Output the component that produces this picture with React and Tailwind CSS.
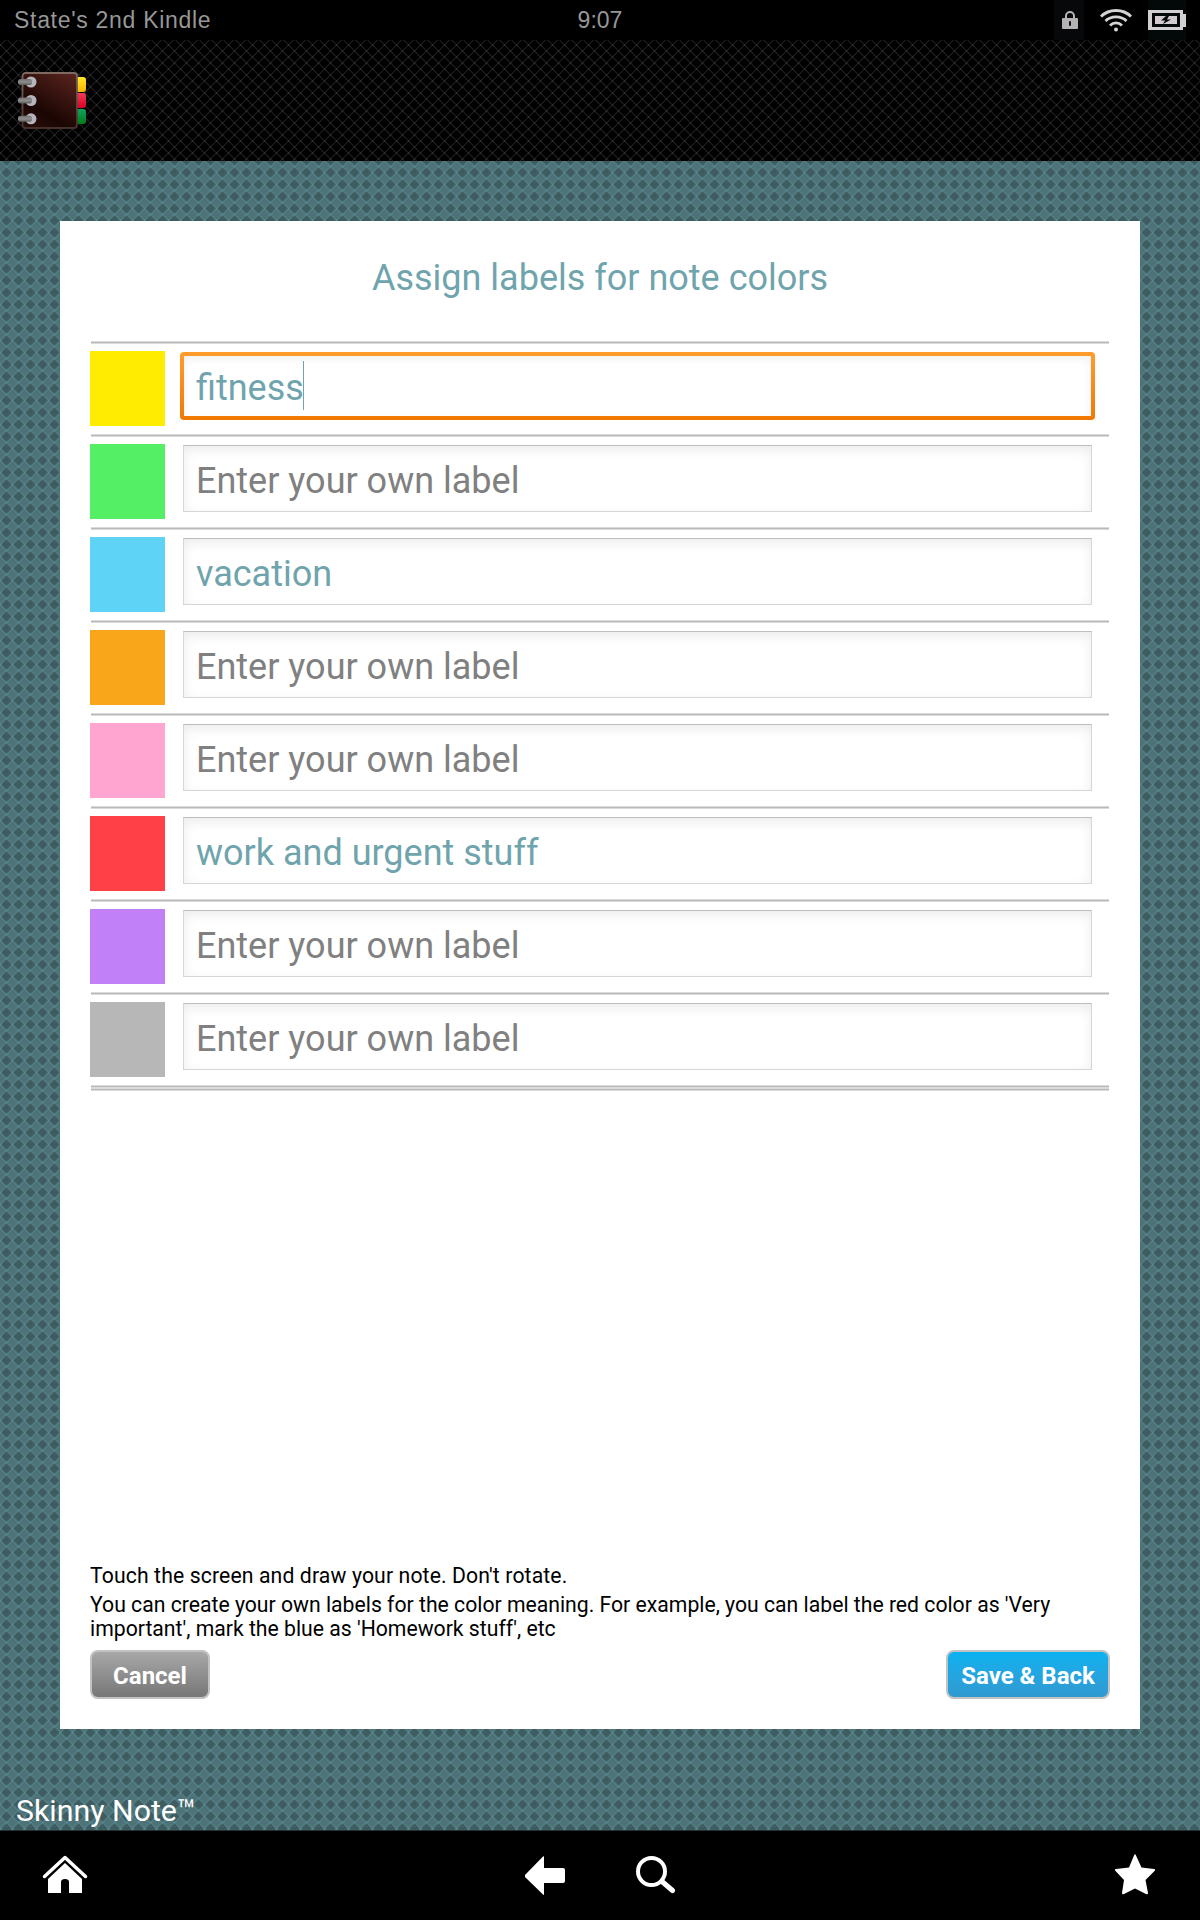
import { useState } from 'react'

const LABELS = [
  { id: 'yellow', swatch: 'bg-[#ffec00]', value: 'fitness' },
  { id: 'green', swatch: 'bg-[#54ef64]', value: '' },
  { id: 'blue', swatch: 'bg-[#5fd3f5]', value: 'vacation' },
  { id: 'orange', swatch: 'bg-[#faa61b]', value: '' },
  { id: 'pink', swatch: 'bg-[#ffa5d0]', value: '' },
  { id: 'red', swatch: 'bg-[#ff4147]', value: 'work and urgent stuff' },
  { id: 'purple', swatch: 'bg-[#c280f8]', value: '' },
  { id: 'grey', swatch: 'bg-[#b7b7b7]', value: '' },
]

// 12px diamond weave, shared by the header and the page background.
function Weave({ id, base, diamond, line, dy }) {
  return (
    <svg className="absolute inset-0 size-full" aria-hidden="true">
      <defs>
        <pattern id={id} width="12" height="12" x="0.5" y={dy} patternUnits="userSpaceOnUse">
          <rect width="12" height="12" fill={base} />
          <path d="M6 0 12 6 6 12 0 6Z" fill={diamond} />
          <path d="M-1 7 7 -1M5 -1 13 7M-1 5 7 13M5 13 13 5" stroke={line} fill="none" />
        </pattern>
      </defs>
      <rect width="100%" height="100%" fill={`url(#${id})`} />
    </svg>
  )
}

function Rule() {
  return <div className="mx-px h-[3px] shrink-0 border-y border-[#dadada] bg-[#b9b9b9]" />
}

function StatusBar() {
  return (
    <div className="flex h-10 items-center bg-black font-['Liberation_Sans',sans-serif] text-[23px] text-[#979797]">
      <span className="w-[400px] pl-[14px] tracking-[0.7px]">State's 2nd Kindle</span>
      <span className="w-[400px] text-center">9:07</span>
      <div className="flex h-10 w-[400px] items-center justify-end pr-[14px]">
        <span className="flex h-10 w-[30px] items-center justify-center bg-[#07080a]">
          <svg className="ml-px" width="16" height="18" viewBox="0 0 16 18" fill="none">
            <path d="M4 8V5a4 4 0 0 1 8 0v3" stroke="#b5b5b5" strokeWidth="2" />
            <rect y="7" width="16" height="11" rx="1" fill="#b5b2b3" />
            <rect x="7" y="10" width="2" height="5" rx="1" fill="#111" />
          </svg>
        </span>
        <svg className="ml-4" width="32" height="23" viewBox="0 0 32 23" fill="none" stroke="#d4d4d4" strokeWidth="2.8">
          <path d="M1 7.500C9 -.5 23 -.5 31 7.500M5.500 12C11 6.500 21 6.500 26.500 12M10 16.500C13.500 13 18.500 13 22 16.500" />
          <circle cx="16" cy="20.500" r="2" fill="#d4d4d4" stroke="none" />
        </svg>
        <span className="ml-4 flex h-10 w-[38px] items-center bg-[#030808]">
          <svg width="38" height="20" viewBox="0 0 38 20">
            <path d="M0 0H35V4H38V17H35V20H0Z" fill="#d1d1d1" />
            <rect x="4" y="3" width="28" height="14" fill="#050808" />
            <rect x="7" y="6" width="22" height="8" fill="#d1cccf" />
            <path d="M18 6 13 10.500H17L15 14 23 9.500H19L21 6Z" fill="#08080a" />
          </svg>
        </span>
      </div>
    </div>
  )
}

function NotebookIcon() {
  return (
    <svg className="relative" width="70" height="58" viewBox="0 0 70 58">
      <defs>
        <linearGradient id="cover" x1="0.9" y1="0" x2="0.3" y2="1">
          <stop offset="0" stopColor="#58231d" />
          <stop offset="0.75" stopColor="#1b0603" />
          <stop offset="1" stopColor="#250c09" />
        </linearGradient>
        <linearGradient id="edge" x2="0" y2="1">
          <stop stopColor="#7d6a60" />
          <stop offset="1" stopColor="#44302c" />
        </linearGradient>
        <linearGradient id="tabY" x2="0" y2="1">
          <stop stopColor="#ffe52c" />
          <stop offset="1" stopColor="#f6b400" />
        </linearGradient>
        <linearGradient id="tabR" x2="0" y2="1">
          <stop stopColor="#f43c5a" />
          <stop offset="1" stopColor="#d9001f" />
        </linearGradient>
        <linearGradient id="tabG" x2="0" y2="1">
          <stop stopColor="#12a35b" />
          <stop offset="1" stopColor="#007c18" />
        </linearGradient>
        <linearGradient id="ring" x2="0" y2="1">
          <stop stopColor="#707070" />
          <stop offset="0.5" stopColor="#8e8e8e" />
          <stop offset="1" stopColor="#5c5c5c" />
        </linearGradient>
      </defs>
      <rect x="52" y="5" width="16" height="15" rx="3" fill="url(#tabY)" />
      <rect x="52" y="21" width="16" height="15" rx="3" fill="url(#tabR)" />
      <rect x="52" y="37" width="16" height="15" rx="3" fill="url(#tabG)" />
      <rect x="4.500" y="1" width="54.500" height="55" rx="3" fill="url(#cover)" stroke="url(#edge)" strokeWidth="1.800" />
      {[10, 28.5, 46.8].map((y) => (
        <g key={y}>
          <circle cx="13" cy={y} r="5.500" fill="#b5b6bd" />
          <rect y={y - 3} width="14" height="6" rx="2.500" fill="url(#ring)" />
        </g>
      ))}
    </svg>
  )
}

function LabelRow({ swatch, value, focused, onChange }) {
  return (
    <div className="flex h-[93px] flex-col">
      <Rule />
      <div className="mt-[7px] flex">
        <div className={`size-[75px] shrink-0 ${swatch}`} />
        {focused ? (
          <div className="mt-px ml-[15px] h-[68px] w-[915px] rounded-[4px] bg-gradient-to-b from-[#ff9d2c] to-[#f07800] p-1">
            <div className="flex h-full items-center bg-white pl-3 shadow-[inset_0_3px_8px_#efefef]">
              <span className="pt-1 text-[36px] leading-none text-[#6fa4ad]">{value}</span>
              <span className="-mt-0.5 -ml-px h-[49px] w-px bg-[#6fa4ad]" />
            </div>
          </div>
        ) : (
          <input
            className="mt-px ml-[18px] h-[67px] w-[909px] border border-[#d6d6d6] border-t-[#bdbdbd] bg-white pt-1 pl-3 text-[36px] text-[#6fa4ad] shadow-[inset_0_4px_12px_#ececec] outline-none placeholder:text-[#808080]"
            placeholder="Enter your own label"
            value={value}
            onChange={(e) => onChange(e.target.value)}
          />
        )}
      </div>
    </div>
  )
}

function NavBar() {
  return (
    <nav className="flex h-[90px] items-start border-t border-[#23302f] bg-black text-white">
      <svg className="mt-6 ml-[42px]" width="46" height="40" viewBox="0 0 46 40">
        <path d="M2.500 21.500 23 2.500 43.500 21.500" fill="none" stroke="currentColor" strokeWidth="3.500" strokeLinecap="round" strokeLinejoin="round" />
        <path d="M6 24 23 8 40 24V38H27V27Q27 24 23 24T19 27V38H6Z" fill="currentColor" />
      </svg>
      <svg className="mt-[25px] ml-[437px]" width="40" height="40" viewBox="0 0 40 40" fill="currentColor">
        <path d="M0 19 18 .5Q19 0 19 1V12H38Q40 12 40 14V25Q40 27 38 27H19V38Q19 39.500 18 38.500L0 21Z" />
      </svg>
      <svg className="mt-[25px] ml-[71px]" width="40" height="38" viewBox="0 0 40 38" fill="none" stroke="currentColor">
        <circle cx="15.500" cy="15.500" r="13.500" strokeWidth="4" />
        <path d="M26 25.500 36.500 34.500" strokeWidth="5" strokeLinecap="round" />
      </svg>
      <svg className="mt-[22px] ml-[438px]" width="42" height="42" viewBox="0 0 42 42" fill="currentColor">
        <path d="M20 2.500Q21 0 22 2.500L27.500 14.500 40 16Q42 16.500 40.500 18L31.500 27 34 40Q34 42 32 41L21 35.500 10 41Q8 42 8 40L10 27 1.500 18Q0 16.500 2 16L15 14.500Z" />
      </svg>
    </nav>
  )
}

export default function App() {
  const [labels, setLabels] = useState(LABELS)

  function rename(id, value) {
    setLabels((all) => all.map((l) => (l.id === id ? { ...l, value } : l)))
  }

  return (
    <div className="flex h-[1920px] w-[1200px] flex-col overflow-hidden bg-black font-[Roboto,sans-serif]">
      <StatusBar />

      <header className="relative flex h-[121px] items-start pt-8 pl-[18px]">
        <Weave id="weave-dark" base="#000" diamond="#000" line="#303030" dy="-1" />
        <NotebookIcon />
      </header>

      <div className="relative flex h-[1669px] flex-col px-[60px] pt-[60px]">
        <Weave id="weave-teal" base="#4d7278" diamond="#3f5c61" line="#5c9098" dy="5.5" />

        <main className="relative flex h-[1508px] flex-col bg-white px-[30px]">
          <h1 className="flex h-[120px] items-center justify-center pb-1.5 text-[36px] text-[#6fa4ad]">
            Assign labels for note colors
          </h1>

          <div>
            {labels.map((l, i) => (
              <LabelRow
                key={l.id}
                swatch={l.swatch}
                value={l.value}
                focused={i === 0}
                onChange={(value) => rename(l.id, value)}
              />
            ))}
            {/* the list closes with a doubled rule */}
            <Rule />
            <Rule />
          </div>

          <div className="mt-auto text-[21.2px] leading-6 text-black">
            <p className="tracking-[0.12px]">Touch the screen and draw your note. Don't rotate.</p>
            <p className="mt-[5px] whitespace-nowrap">
              You can create your own labels for the color meaning. For example, you can label the red color as 'Very
              <br />
              important', mark the blue as 'Homework stuff', etc
            </p>
          </div>

          <div className="mt-[9px] mb-[30px] flex justify-between">
            <button className="h-[49px] w-[120px] rounded-lg border-2 border-[#c2c2c2] bg-gradient-to-b from-[#a8a8a8] to-[#777] pt-0.5 text-[24px] leading-none font-bold text-white">
              Cancel
            </button>
            <button className="h-[49px] w-[164px] rounded-lg border-2 border-[#c2c2c2] bg-gradient-to-b from-[#06b2f1] to-[#3099d0] pt-0.5 text-[24px] leading-none font-bold whitespace-nowrap text-white">
              Save &amp; Back
            </button>
          </div>
        </main>

        <footer className="relative -ml-[44px] flex flex-1 items-end pb-px text-[30.300px] leading-9 text-white">
          Skinny Note™
        </footer>
      </div>

      <NavBar />
    </div>
  )
}
